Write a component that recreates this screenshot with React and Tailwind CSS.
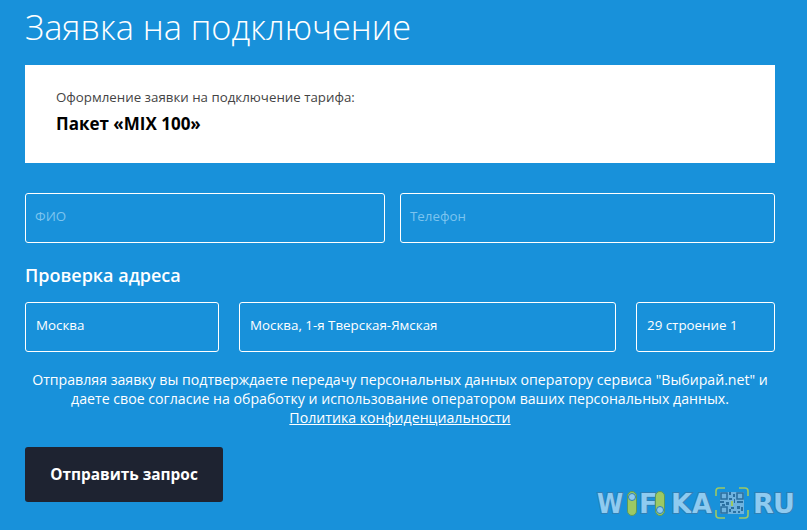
const font = { fontFamily: '"Open Sans", "Noto Sans", sans-serif' };

function Field({ className, children, muted }) {
  return (
    <div className={`h-[50px] flex items-center pb-[4px] border border-white rounded-[3px] text-[13.35px] ${muted ? "pl-[9px] text-[#7cc4ef]" : "pl-[10px] text-white"} ${className}`}>
      {children}
    </div>
  );
}

const logoText = {
  fontFamily: '"DejaVu Sans", sans-serif',
  WebkitTextStroke: "2px #2f7fb5",
  paintOrder: "stroke fill",
};

function Pill({ ring }) {
  return (
    <span className="relative inline-block h-[25px] w-[10px] rounded-full border border-[#5c9a5a] bg-[#9cc964]">
      <span className={`absolute left-[0px] h-[8px] w-[8px] rounded-full border border-[#2f7fb5] bg-[#8fcbf0] ${ring}`} />
    </span>
  );
}

function Watermark() {
  return (
    <div className="absolute left-[597px] top-[486px] flex h-[34px] items-center text-[27px] font-bold leading-none text-[#8fcbf0]" style={logoText} aria-label="WIFIKA.RU">
      <span className="inline-block w-[30px] origin-left scale-x-[0.88]">W</span>
      <Pill ring="top-[1px]" />
      <span className="ml-[2px] inline-block w-[16px]">F</span>
      <Pill ring="bottom-[1px]" />
      <span className="ml-[6px] inline-block w-[21px]">K</span>
      <span className="inline-block w-[19px] origin-left scale-x-[0.95]">A</span>
      <svg width="34" height="32" viewBox="0 0 34 32" className="ml-[4px]">
        <path d="M1 9V4a3 3 0 0 1 3-3h6M24 1h6a3 3 0 0 1 3 3v5M33 23v5a3 3 0 0 1-3 3h-6M10 31H4a3 3 0 0 1-3-3v-5" fill="none" stroke="#9cc964" strokeWidth="1.6" />
        <rect x="5" y="5" width="24" height="22" fill="#6fb3df" />
        <path d="M6 6h6v6H6zM22 6h6v6h-6zM6 20h6v6H6z" fill="none" stroke="#2a6f9f" strokeWidth="1.6" />
        <path d="M14 5h2v3h-2zM18 7h2v3h-2zM14 11h3v2h-3zM19 12h1v4h-1zM5 14h4v2H5zM11 15h3v3h-3zM22 14h6v2h-6zM16 20h3v2h-3zM22 19h3v3h-3zM26 20h2v4h-2zM14 22h2v3h-2zM18 24h3v2h-3zM23 24h2v2h-2zM7 17h3v2H7z" fill="#2a6f9f" />
        <rect x="16" y="14" width="2" height="5" fill="#9cc964" />
      </svg>
      <span className="ml-[4px] inline-block w-[20px]">R</span>
      <span className="inline-block w-[20px]">U</span>
    </div>
  );
}

export default function App() {
  return (
    <div className="relative h-[530px] w-[807px] overflow-hidden bg-[#1891da] px-[25px]" style={font}>
      <div className="w-[750px]">
        <h1 className="h-[65px] pt-[7px] text-[34.3px] leading-[40px] font-light text-white">Заявка на подключение</h1>
        <div className="h-[98px] bg-white pl-[31px] pt-[22px]">
          <p className="text-[13.3px] leading-[20px] text-[#444]">Оформление заявки на подключение тарифа:</p>
          <p className="mt-[5px] text-[17px] leading-[24px] font-bold text-black">Пакет «MIX 100»</p>
        </div>
        <div className="mt-[30px] flex gap-[15px]">
          <Field muted className="w-[360px]">ФИО</Field>
          <Field muted className="w-[375px]">Телефон</Field>
        </div>
        <h2 className="mt-[20px] text-[18px] leading-[24px] font-semibold text-white">Проверка адреса</h2>
        <div className="mt-[15px] flex gap-[20px]">
          <Field className="w-[194px]">Москва</Field>
          <Field className="w-[377px]">Москва, 1-я Тверская-Ямская</Field>
          <Field className="w-[139px]">29 строение 1</Field>
        </div>
        <div className="mt-[18px] text-center text-[14.15px] leading-[19px] text-white">
          <p className="whitespace-nowrap">Отправляя заявку вы подтверждаете передачу персональных данных оператору сервиса "Выбирай.net" и</p>
          <p>даете свое согласие на обработку и использование оператором ваших персональных данных.</p>
          <p className="underline">Политика конфиденциальности</p>
        </div>
        <button className="mt-[20px] block h-[55px] w-[198px] rounded-[3px] bg-[#1e2331] text-[15.4px] font-bold text-white">Отправить запрос</button>
      </div>
      <Watermark />
    </div>
  );
}
